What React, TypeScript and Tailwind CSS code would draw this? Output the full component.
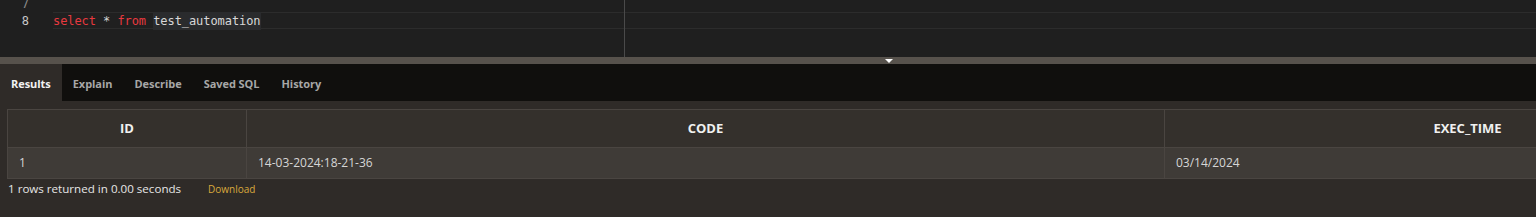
import React from "react";

const mono = { fontFamily: '"DejaVu Sans Mono", "Liberation Mono", monospace' };

export default function App() {
  const tabs = ["Results", "Explain", "Describe", "Saved SQL", "History"];
  return (
    <div
      className="w-[1536px] h-[217px] overflow-hidden bg-[#2f2b28] flex flex-col"
      style={{ fontFamily: '"Open Sans", "Noto Sans", sans-serif' }}
    >
      {/* Editor */}
      <div className="relative h-[57px] shrink-0 bg-[#1f1f1f] overflow-hidden">
        <div className="flex flex-col -mt-[5px]" style={mono}>
          <div className="flex h-[17px] items-center">
            <div className="w-[53px] shrink-0 pr-[24px] text-right text-[12px] text-[#8a8a8a]">7</div>
            <div className="flex-1" />
          </div>
          <div className="flex h-[17px] items-center">
            <div className="w-[53px] shrink-0 pr-[24px] text-right text-[12px] text-[#c8c8c8]">8</div>
            <div className="flex-1 h-[17px] flex items-center border-y border-[#2c2c2c] bg-[#202020] text-[12px] tracking-[-0.07px] whitespace-pre">
              <span className="text-[#e8393f]">select</span>
              <span className="text-[#d4d4d4]"> * </span>
              <span className="text-[#e8393f]">from</span>
              <span className="text-[#d4d4d4]"> </span>
              <span className="text-[#d8d8d8] bg-[#2a2b2d]">test_automation</span>
            </div>
          </div>
        </div>
        <div className="absolute left-[624px] top-0 h-full w-px bg-[#4a4a4a]" />
      </div>

      {/* Splitter */}
      <div className="h-[7px] shrink-0 bg-[#57524c] flex items-center pl-[885px]">
        <svg width="8" height="4" viewBox="0 0 8 4">
          <polygon points="0,0 8,0 4,4" fill="#ffffff" />
        </svg>
      </div>

      {/* Tabs */}
      <div className="h-[37px] shrink-0 bg-[#100f0d] flex">
        {tabs.map((t, i) => (
          <div
            key={t}
            className={
              i === 0
                ? "h-full flex items-center pt-[3px] px-[11px] bg-[#2f2b28] text-[11px] font-bold tracking-[-0.05px] text-[#f2f2f2]"
                : "h-full flex items-center pt-[3px] px-[11px] text-[11px] font-bold tracking-[-0.05px] text-[#a7a7a7]"
            }
          >
            {t}
          </div>
        ))}
      </div>

      {/* Content */}
      <div className="flex-1 pl-[7px] pt-[8px] overflow-hidden">
        <div className="w-[1764px] border border-[#4a4541]">
          <div className="flex h-[38px] bg-[#34302c] border-b border-[#4a4541] text-[13px] font-bold text-[#f0f0f0]">
            <div className="w-[239px] shrink-0 flex items-center justify-center border-r border-[#4a4541]">ID</div>
            <div className="w-[918px] shrink-0 flex items-center justify-center border-r border-[#4a4541]">CODE</div>
            <div className="flex-1 flex items-center justify-center">EXEC_TIME</div>
          </div>
          <div className="flex h-[30px] bg-[#3f3b37] text-[12px] text-[#d6d6d6]">
            <div className="w-[239px] shrink-0 flex items-center pl-[11px] border-r border-[#4a4541]">1</div>
            <div className="w-[918px] shrink-0 flex items-center pl-[11px] border-r border-[#4a4541]">14-03-2024:18-21-36</div>
            <div className="flex-1 flex items-center pl-[11px]">03/14/2024</div>
          </div>
        </div>
        <div className="flex items-center h-[20px]">
          <span className="w-[201px] text-[11.6px] text-[#e6e6e6] pl-[1px]">1 rows returned in 0.00 seconds</span>
          <span className="text-[10px] text-[#d9a93c]">Download</span>
        </div>
      </div>
    </div>
  );
}
